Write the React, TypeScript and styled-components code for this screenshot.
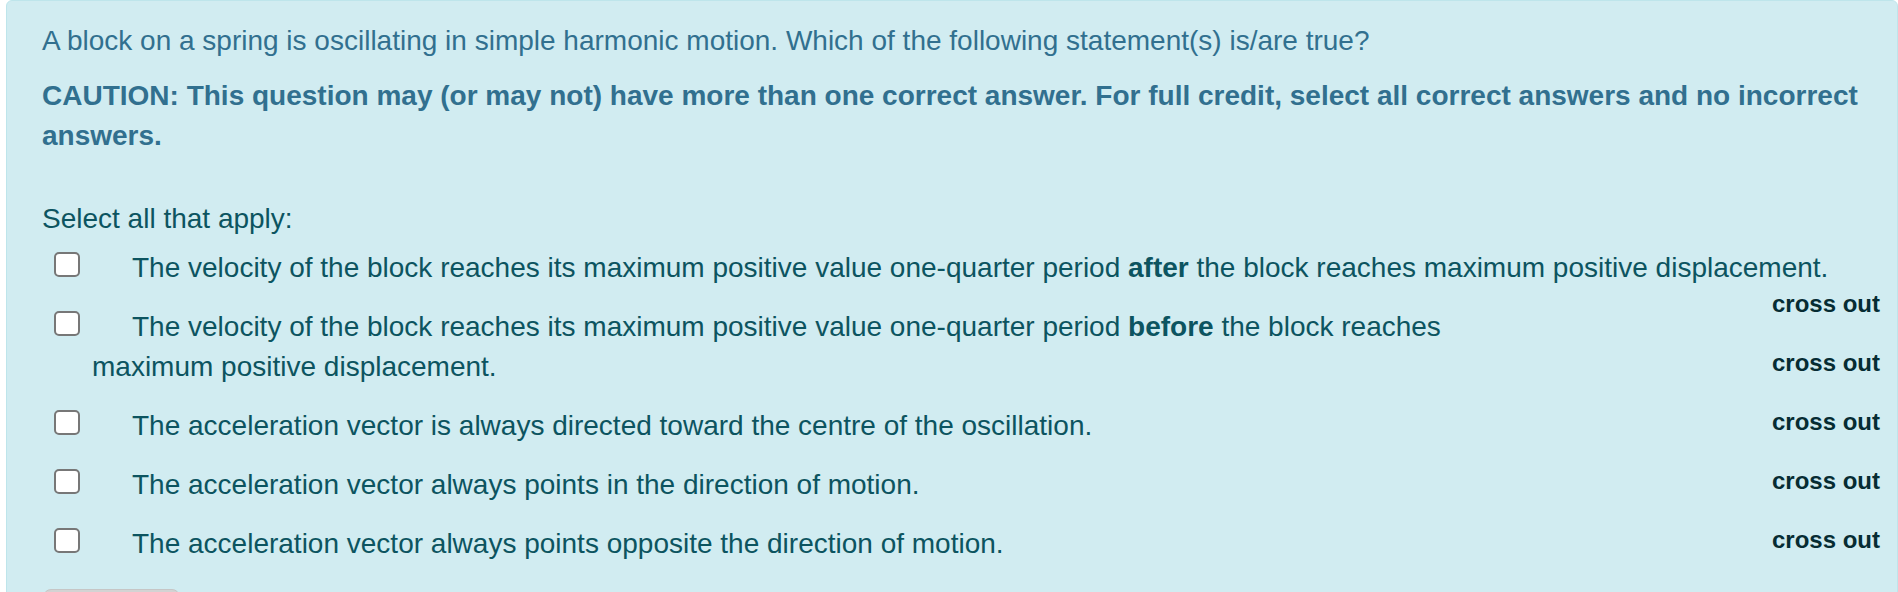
import React from "react";
import styled, { createGlobalStyle } from "styled-components";

const GlobalStyle = createGlobalStyle`
  html, body {
    margin: 0;
    padding: 0;
    background: #ffffff;
    overflow: hidden;
  }
  body {
    font-family: "Liberation Sans", Arial, Helvetica, sans-serif;
  }
`;

const Panel = styled.section`
  margin: 0 0 0 6px;
  padding: 20px 17px 0 35px;
  background: #d1ecf1;
  border: 1px solid #bee5eb;
  border-radius: 6px;
  font-size: 28px;
  line-height: 40px;
  color: #0c5460;
  min-height: 640px;
`;

const Question = styled.p`
  margin: 0;
  color: #31708f;
`;

const Caution = styled.p`
  margin: 15px 0 0;
  color: #31708f;
  font-weight: 700;
`;

const Prompt = styled.p`
  margin: 43px 0 0;
  color: #0c5460;
`;

const OptionList = styled.div`
  margin-top: 9px;
`;

const Option = styled.div`
  padding-left: 50px;
  margin-bottom: 19px;
  line-height: 40px;
  color: #0c5460;
`;

const Box = styled.span`
  display: inline-block;
  box-sizing: border-box;
  width: 26px;
  height: 25px;
  margin-left: -38px;
  margin-right: 52px;
  vertical-align: baseline;
  background: #ffffff;
  border: 2px solid #777777;
  border-radius: 5px;
  cursor: pointer;
`;

const CrossOut = styled.span`
  float: right;
  font-size: 24px;
  line-height: 31px;
  font-weight: 700;
  color: #062c33;
  cursor: pointer;
`;

const Strong = styled.b`
  font-weight: 700;
`;

const SubmitButton = styled.button`
  display: block;
  clear: both;
  margin: 25px 0 0 1px;
  width: 137px;
  height: 68px;
  background: #d3d3d3;
  border: 1px solid #c6c6c6;
  border-radius: 8px;
  cursor: pointer;
`;

type Choice = { id: number; content: React.ReactNode };

const choices: Choice[] = [
  {
    id: 1,
    content: (
      <>
        The velocity of the block reaches its maximum positive value one-quarter period{" "}
        <Strong>after</Strong> the block reaches maximum positive displacement.
      </>
    ),
  },
  {
    id: 2,
    content: (
      <>
        The velocity of the block reaches its maximum positive value one-quarter period{" "}
        <Strong>before</Strong> the block reaches
        <br />
        maximum positive displacement.
      </>
    ),
  },
  {
    id: 3,
    content: <>The acceleration vector is always directed toward the centre of the oscillation.</>,
  },
  {
    id: 4,
    content: <>The acceleration vector always points in the direction of motion.</>,
  },
  {
    id: 5,
    content: <>The acceleration vector always points opposite the direction of motion.</>,
  },
];

export default function App() {
  return (
    <>
      <GlobalStyle />
      <Panel>
        <Question>
          A block on a spring is oscillating in simple harmonic motion. Which of the following
          statement(s) is/are true?
        </Question>
        <Caution>
          CAUTION: This question may (or may not) have more than one correct answer. For full
          credit, select all correct answers and no incorrect answers.
        </Caution>
        <Prompt>Select all that apply:</Prompt>
        <OptionList>
          {choices.map((c) => (
            <Option key={c.id}>
              <Box role="checkbox" aria-checked="false" />
              {c.content}
              <CrossOut>cross out</CrossOut>
            </Option>
          ))}
        </OptionList>
        <SubmitButton aria-label="Submit" />
      </Panel>
    </>
  );
}
